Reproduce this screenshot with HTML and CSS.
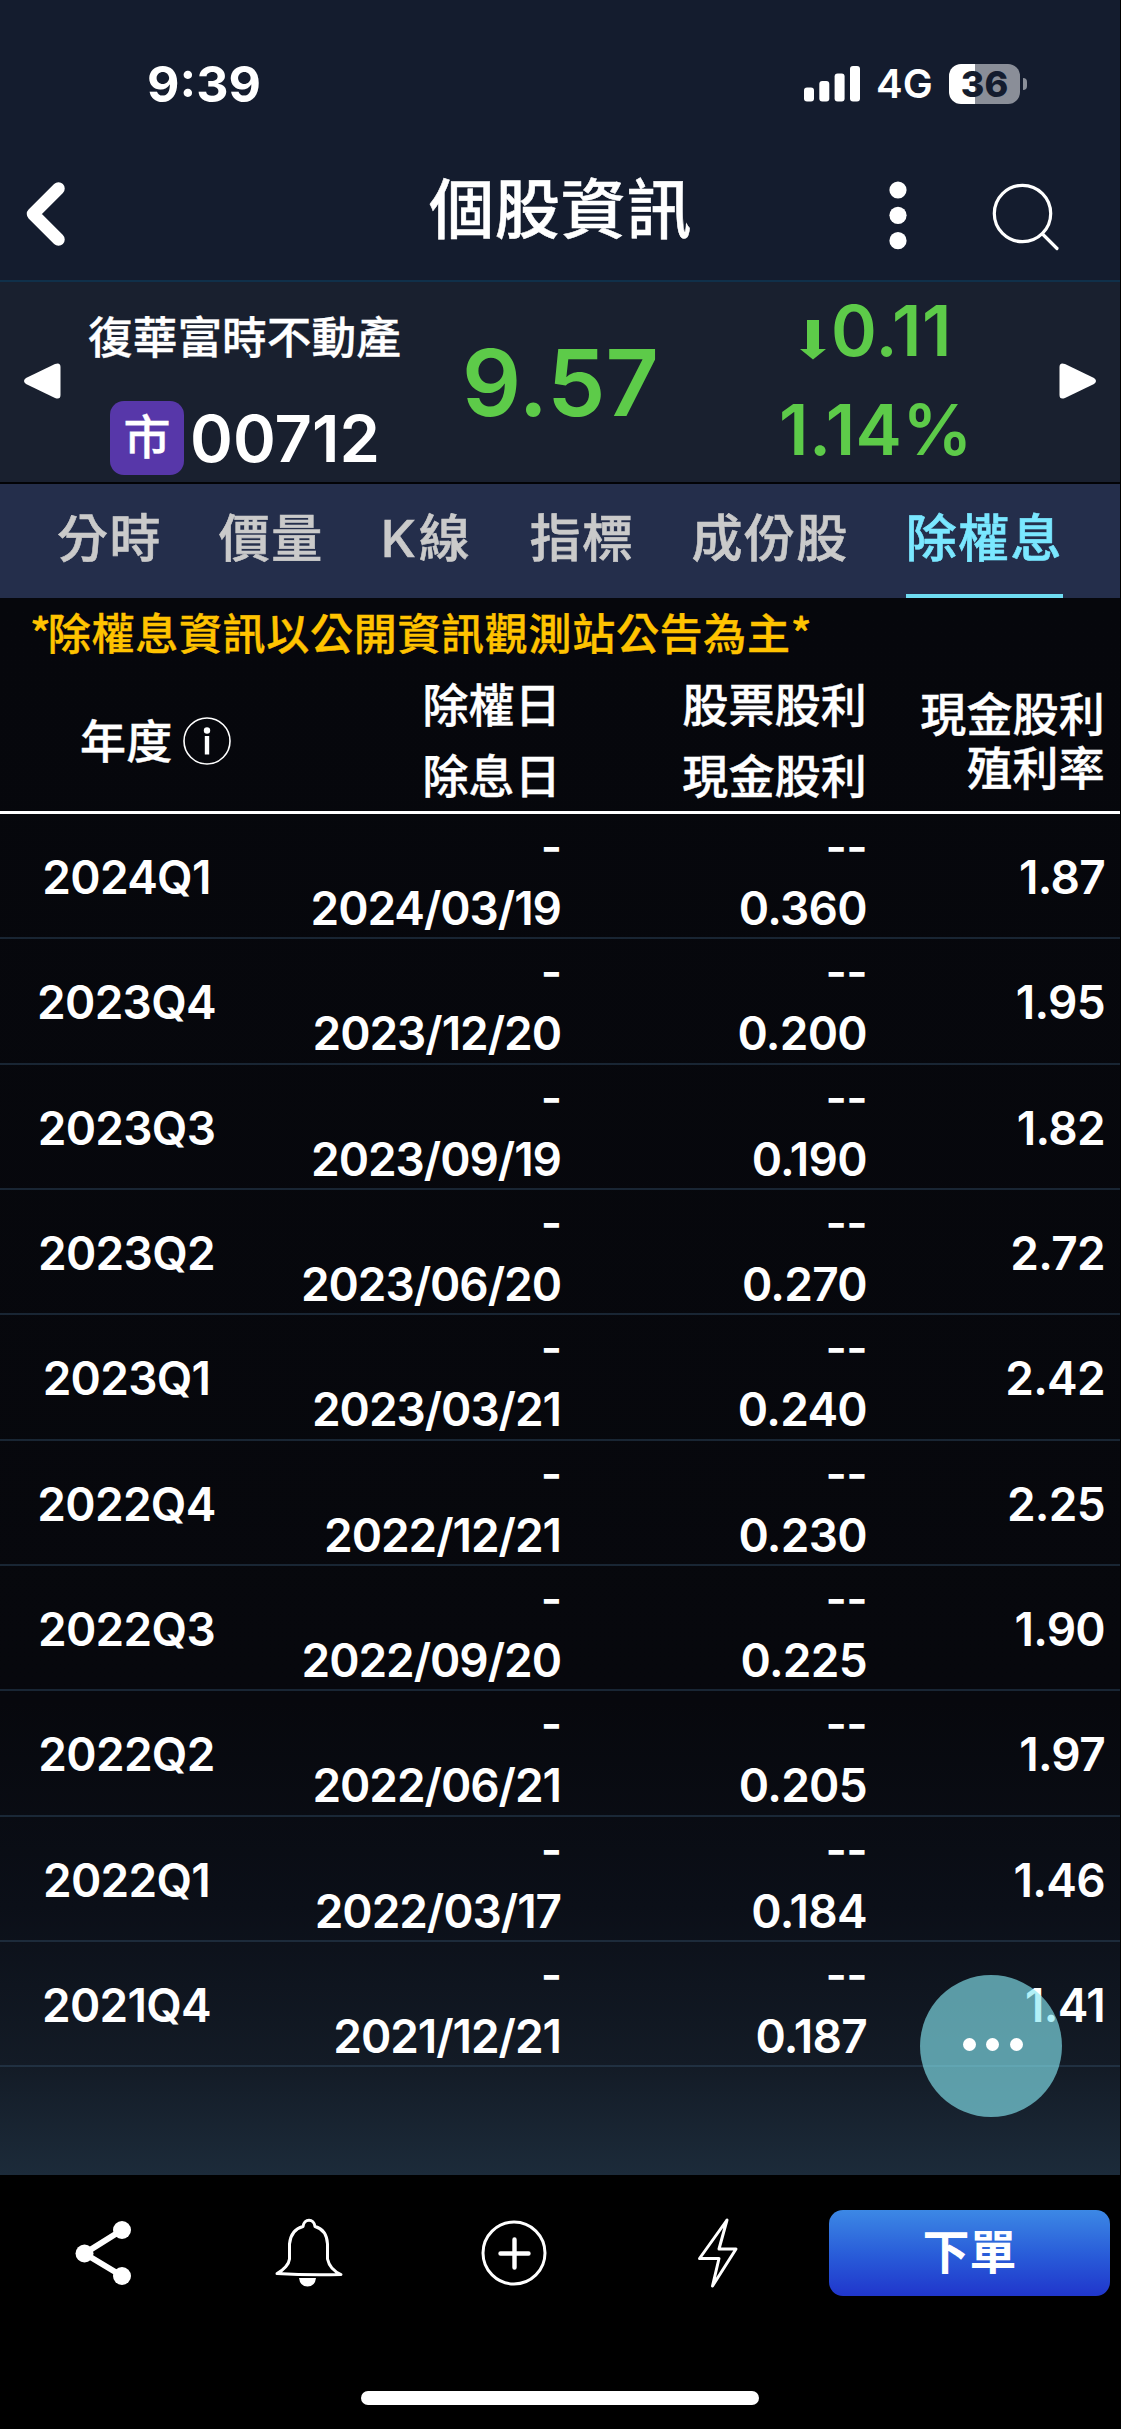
FILE: index.html
```html
<!DOCTYPE html>
<html lang="zh-Hant">
<head>
<meta charset="utf-8">
<title>個股資訊</title>
<link rel="stylesheet" href="styles.css">
</head>
<body>
<div class="phone">
  <div class="status">
    <span class="time">9:39</span>
    <div class="status-right">
      <svg class="signal" width="56" height="36" viewBox="0 0 56 36" fill="#fff"><rect x="0" y="21.5" width="10" height="14" rx="3"/><rect x="15.3" y="15" width="10" height="20.5" rx="3"/><rect x="30.6" y="7.5" width="10" height="28" rx="3"/><rect x="46" y="0" width="10" height="35.5" rx="3"/></svg>
      <span class="net">4G</span>
      <div class="battery"><span class="level">36</span></div>
      <span class="nub"></span>
    </div>
  </div>
  <header class="nav">
    <svg class="back" width="40" height="66" viewBox="0 0 40 66" fill="none" stroke="#fff" stroke-width="12.5" stroke-linecap="round" stroke-linejoin="round"><path d="M32.5 7.5 7 33l25.500 25.500"/></svg>
    <h1 class="title">個股資訊</h1>
    <svg class="more" width="18" height="70" viewBox="0 0 18 70" fill="#fff"><circle cx="9" cy="10" r="8.600"/><circle cx="9" cy="35.300" r="8.600"/><circle cx="9" cy="60.700" r="8.600"/></svg>
    <svg class="search" width="68" height="68" viewBox="0 0 68 68" fill="none" stroke="#fff" stroke-width="3.200" stroke-linecap="round"><circle cx="30.500" cy="30.500" r="28.200"/><path d="M50.500 51 65 65.500"/></svg>
  </header>
  <section class="quote">
    <svg class="arrow" width="37" height="36" viewBox="0 0 37 36" fill="#fff"><path d="M2 15 31 1q5.500-2 5.500 3v28q0 5-5.500 3L2 21q-4-3 0-6z"/></svg>
    <div class="stock">
      <div class="name">復華富時不動產</div>
      <div class="code"><span class="badge">市</span><span class="num">00712</span></div>
    </div>
    <div class="price">9.57</div>
    <div class="change">
      <div class="diff"><svg width="26" height="40" viewBox="0 0 26 40" fill="#5dcb49"><path d="M7 0h12v29h7L13 39.500 0 29h7z"/></svg><span>0.11</span></div>
      <div class="pct">1.14%</div>
    </div>
    <svg class="arrow" width="37" height="36" viewBox="0 0 37 36" fill="#fff"><path d="M35 15 6 1Q.5-1 .5 4v28q0 5 5.500 3l29-14q4-3 0-6z"/></svg>
  </section>
  <nav class="tabs">
    <span class="tab">分時</span><span class="tab">價量</span><span class="tab k">K線</span><span class="tab">指標</span><span class="tab">成份股</span><span class="tab active">除權息</span>
  </nav>
  <main class="content">
    <p class="note"><span class="star">*</span>除權息資訊以公開資訊觀測站公告為主<span class="star">*</span></p>
    <div class="row head">
      <div class="year">年度<svg width="48" height="48" viewBox="0 0 48 48" fill="none" stroke="#fff"><circle cx="24" cy="24" r="23" stroke-width="1.600"/><circle cx="24" cy="13.500" r="3.200" fill="#fff" stroke="none"/><path d="M24 19v18.500" stroke-width="4.400"/></svg></div>
      <div class="pair"><span>除權日</span><span>除息日</span></div>
      <div class="pair"><span>股票股利</span><span>現金股利</span></div>
      <div class="yield"><span>現金股利</span><span>殖利率</span></div>
    </div>
    <div class="row"><div class="year">2024Q1</div><div class="pair date"><span>-</span><span>2024/03/19</span></div><div class="pair"><span>--</span><span>0.360</span></div><div class="yield">1.87</div></div>
    <div class="row"><div class="year">2023Q4</div><div class="pair date"><span>-</span><span>2023/12/20</span></div><div class="pair"><span>--</span><span>0.200</span></div><div class="yield">1.95</div></div>
    <div class="row"><div class="year">2023Q3</div><div class="pair date"><span>-</span><span>2023/09/19</span></div><div class="pair"><span>--</span><span>0.190</span></div><div class="yield">1.82</div></div>
    <div class="row"><div class="year">2023Q2</div><div class="pair date"><span>-</span><span>2023/06/20</span></div><div class="pair"><span>--</span><span>0.270</span></div><div class="yield">2.72</div></div>
    <div class="row"><div class="year">2023Q1</div><div class="pair date"><span>-</span><span>2023/03/21</span></div><div class="pair"><span>--</span><span>0.240</span></div><div class="yield">2.42</div></div>
    <div class="row"><div class="year">2022Q4</div><div class="pair date"><span>-</span><span>2022/12/21</span></div><div class="pair"><span>--</span><span>0.230</span></div><div class="yield">2.25</div></div>
    <div class="row"><div class="year">2022Q3</div><div class="pair date"><span>-</span><span>2022/09/20</span></div><div class="pair"><span>--</span><span>0.225</span></div><div class="yield">1.90</div></div>
    <div class="row"><div class="year">2022Q2</div><div class="pair date"><span>-</span><span>2022/06/21</span></div><div class="pair"><span>--</span><span>0.205</span></div><div class="yield">1.97</div></div>
    <div class="row"><div class="year">2022Q1</div><div class="pair date"><span>-</span><span>2022/03/17</span></div><div class="pair"><span>--</span><span>0.184</span></div><div class="yield">1.46</div></div>
    <div class="row"><div class="year">2021Q4</div><div class="pair date"><span>-</span><span>2021/12/21</span></div><div class="pair"><span>--</span><span>0.187</span></div><div class="yield">1.41</div></div>
    <div class="fab"><i></i><i></i><i></i></div>
  </main>
  <footer class="toolbar">
    <div class="tool"><svg width="60" height="72" viewBox="0 0 60 72" fill="#fff" stroke="#fff"><path d="M49 13 11.500 36.500 49 59" fill="none" stroke-width="6"/><circle cx="49" cy="13" r="9" stroke="none"/><circle cx="11.500" cy="36.500" r="9" stroke="none"/><circle cx="49" cy="59" r="9" stroke="none"/></svg></div>
    <div class="tool"><svg width="68" height="72" viewBox="0 0 68 72" fill="none" stroke="#fff" stroke-width="3" stroke-linejoin="round"><path d="M2 56.500C9 53 14 47 14.500 42V27C15.500 17 20 11.500 28 9.500 29 1 39 1 40 9.500 47 11.500 52 17 52.500 27V42C54 49 58 54 66 57.500Q34 58.500 2 56.500z"/><path d="M24 61h17q-1 8.500-8.500 8.500T24 61z" fill="#fff" stroke="none"/></svg></div>
    <div class="tool"><svg width="66" height="72" viewBox="0 0 66 72" fill="none" stroke="#fff" stroke-linecap="round"><circle cx="33" cy="36" r="31" stroke-width="3"/><path d="M19.500 36.500h28M33.500 22.500v28" stroke-width="4.400"/></svg></div>
    <div class="tool"><svg width="44" height="72" viewBox="0 0 44 72" fill="none" stroke="#fff" stroke-width="3" stroke-linejoin="round"><path d="M31 3 3.500 41.500H23L16.500 69 40 32H23z"/></svg></div>
    <div class="order">下單</div>
  </footer>
  <div class="home"><span></span></div>
</div>
</body>
</html>
```
FILE: styles.css
```css
* { box-sizing: border-box; }
body { margin: 0; background: #000; color: #fff; font-family: Inter, "Noto Sans CJK TC", sans-serif; font-weight: 500; line-height: 1; }
svg { display: block; flex: none; }
.phone { width: 1120px; height: 2429px; display: flex; flex-direction: column; background: #000; overflow: hidden; white-space: nowrap; }
.status { height: 140px; background: #141c2e; display: flex; justify-content: space-between; padding: 0 93px 0 147px; }
.time { font-size: 50px; font-weight: 700; margin-top: 59px; }
.status-right { display: flex; align-items: center; height: 40px; margin-top: 64px; }
.signal { margin-right: 16px; }
.net { font-size: 40px; font-weight: 600; width: 56px; margin-right: 17px; }
.battery { width: 71px; height: 40px; border-radius: 12px; background: linear-gradient(90deg, #fff 26px, #8a8e98 26px); display: flex; align-items: center; justify-content: center; }
.level { font-size: 36px; font-weight: 800; color: #141c2e; }
.nub { width: 4px; height: 12px; margin-left: 3px; border-radius: 0 4px 4px 0; background: #8a8e98; }
.nav { height: 142px; background: #141c2e; border-bottom: 2px solid #10304a; display: grid; grid-template-columns: 403px 314px 1fr 68px; align-items: start; padding: 0 60px 0 26px; }
.back { margin-top: 41px; }
.title { margin: 37px 0 0; font-size: 65px; font-weight: 500; line-height: 65px; letter-spacing: .8px; -webkit-text-stroke: .5px currentColor; }
.more { margin: 40px 0 0 146px; }
.search { margin-top: 43px; }
.quote { height: 200px; background: #19202f; display: grid; grid-template-columns: 37px 379px 257px 1fr 37px; padding: 0 24px 0 24px; align-items: start; }
.quote .arrow { margin-top: 81px; }
.stock { padding-left: 27px; }
.name { font-size: 44.700px; line-height: 54px; margin-top: 29px; -webkit-text-stroke: .3px currentColor; }
.code { display: flex; align-items: center; height: 74px; margin: 36px 0 0 22px; gap: 6px; }
.badge { width: 74px; height: 74px; border-radius: 14px; background: #5737a9; font-size: 47px; line-height: 71px; text-align: center; -webkit-text-stroke: .3px currentColor; }
.num { font-size: 65px; font-weight: 600; }
.price { font-size: 92.500px; font-weight: 600; color: #5dcb49; margin: 54px 0 0 22px; }
.change { color: #5dcb49; font-size: 69.500px; font-weight: 560; text-align: center; line-height: 100px; padding-right: 4px; letter-spacing: .6px; }
.diff { display: flex; justify-content: center; align-items: center; gap: 5px; height: 98px; }
.diff svg { margin-top: 18px; }
.tabs { height: 116px; background: #242e4b; border-top: 2px solid #020306; display: flex; gap: 57px; padding-left: 57px; font-size: 51px; letter-spacing: 1.400px; line-height: 109px; color: #cacaca; -webkit-text-stroke: .6px currentColor; }
.tab { height: 114px; }
.tab.k { letter-spacing: 3px; }
.tab.active { color: #7ae7ff; border-bottom: 4px solid #6fdcf2; }
.content { position: relative; height: 1577px; background: linear-gradient(#06070c 0, #07080d 70%, #0b0f18 83%, #131b26 93%, #1c2b3a 100%); }
.note { margin: 0; height: 72px; padding: 3px 0 0 30px; color: #ffc300; font-size: 43px; letter-spacing: .7px; line-height: 60px; -webkit-text-stroke: .4px currentColor; }
.star { font-family: "Noto Sans CJK TC", sans-serif; letter-spacing: -3px; }
.row { display: grid; grid-template-columns: 253px 308px 306px 238px; height: 125.330px; border-bottom: 2px solid rgba(48, 76, 100, .45); font-size: 46px; font-weight: 600; letter-spacing: -.7px; }
.row > div { display: flex; flex-direction: column; align-items: flex-end; justify-content: center; padding-top: 1px; }
.row > .year { align-items: center; }
.pair span { line-height: 62px; }
.row > .date { letter-spacing: -1.050px; }
.head { height: 144px; border-bottom: 3px solid #fff; font-weight: 500; letter-spacing: .2px; -webkit-text-stroke: .4px currentColor; }
.row.head > div { padding-top: 0; }
.row.head > .year { flex-direction: row; justify-content: flex-start; padding-left: 80px; gap: 11px; }
.head .pair span { line-height: 71px; }
.head .yield span { line-height: 54px; }
.fab { position: absolute; left: 920px; top: 1377px; width: 142px; height: 142px; border-radius: 50%; background: rgba(134, 232, 243, .64); display: flex; align-items: center; justify-content: center; gap: 10.500px; padding: 0 0 3px 3px; }
.fab i { width: 13px; height: 13px; border-radius: 50%; background: #fff; }
.toolbar { height: 156px; display: grid; grid-template-columns: 206px 206px 204px 213px 281px; align-items: center; }
.tool { display: flex; justify-content: center; }
.tool:nth-child(4) { padding-right: 9px; }
.order { height: 86px; border-radius: 14px; background: linear-gradient(#3c88e5, #285ad8 55%, #2036cc); text-align: center; font-size: 47px; font-weight: 600; line-height: 84px; }
.home { flex: 1; display: flex; justify-content: center; padding-top: 60px; }
.home span { width: 398px; height: 14px; border-radius: 7px; background: #fff; }
```
